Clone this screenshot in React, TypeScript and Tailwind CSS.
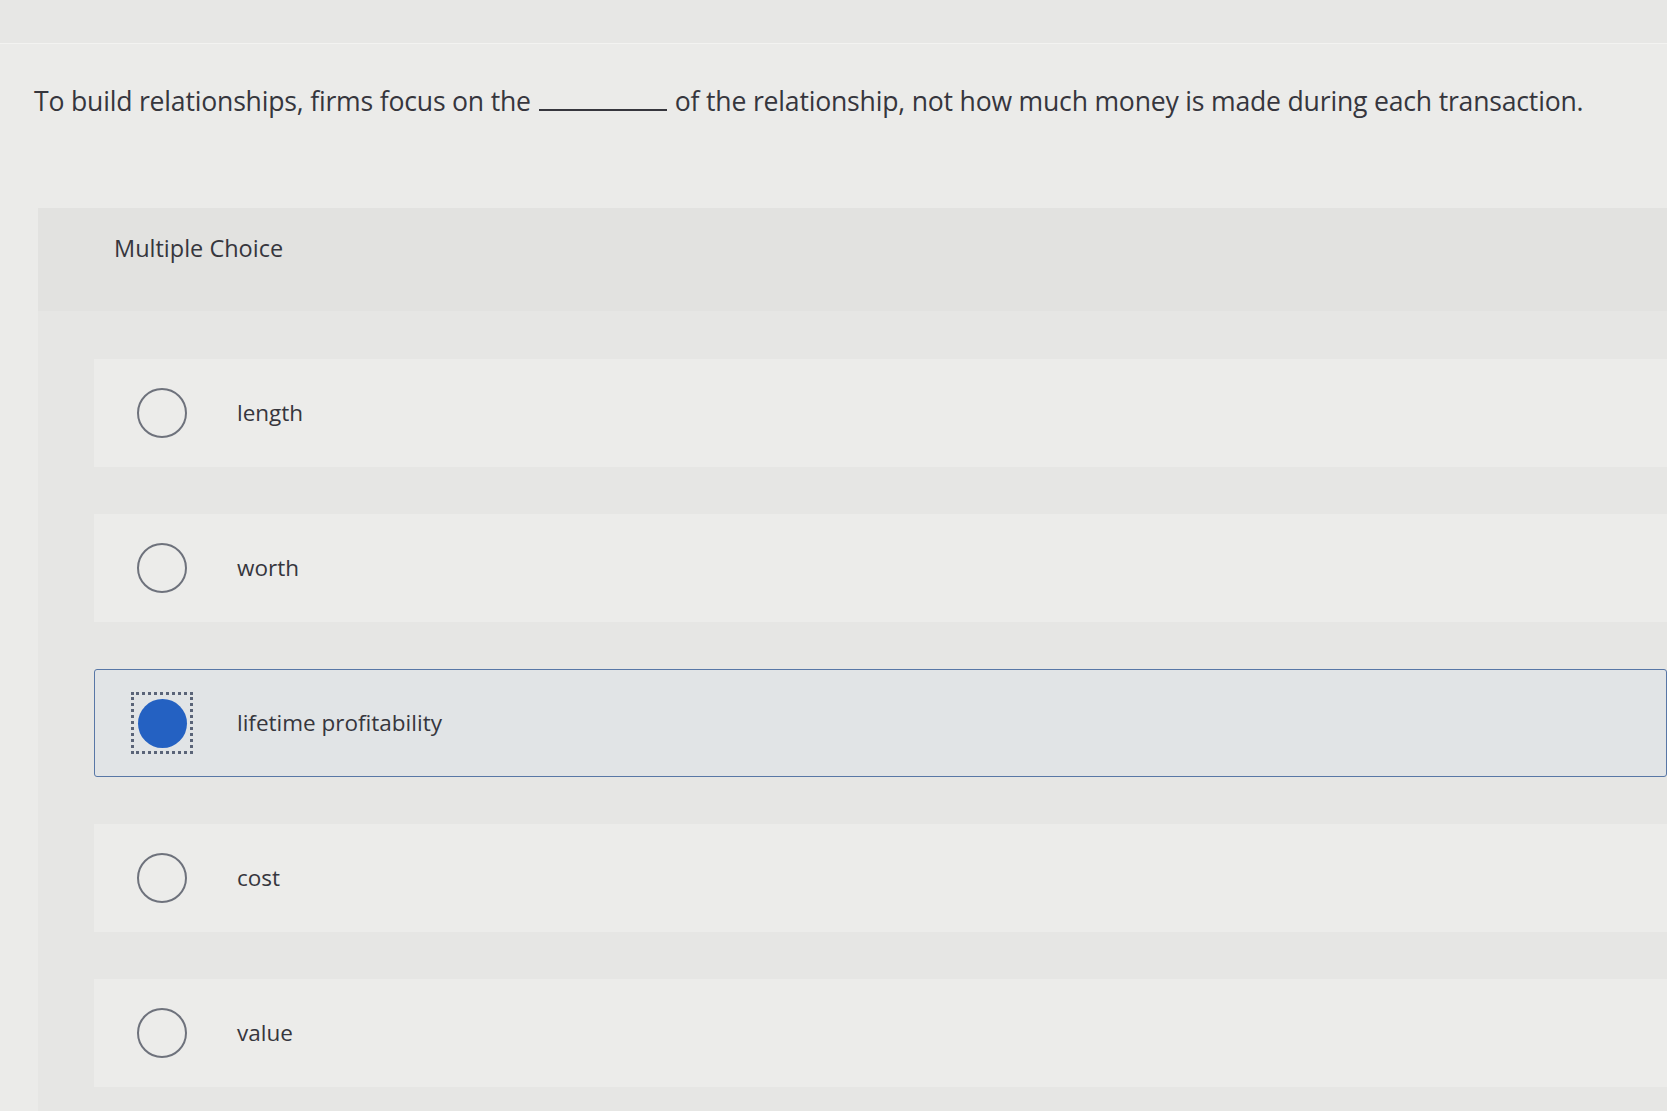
import { useState } from 'react';

const options = ['length', 'worth', 'lifetime profitability', 'cost', 'value'];

export default function App() {
  const [selected, setSelected] = useState(2);

  return (
    <div
      className="h-[1111px] w-full overflow-hidden bg-[#ebebe9] text-[#36363d]"
      style={{ fontFamily: '"Open Sans", "Liberation Sans", sans-serif' }}
    >
      {/* top strip */}
      <div className="h-[44px] border-b border-[#f3f3f1] bg-[#e7e7e5]" />

      {/* question */}
      <div className="pl-[34px] pt-[40px] pr-6">
        <p className="flex items-end whitespace-nowrap text-[26.6px] leading-[34px] tracking-[-0.2px]">
          <span>To build relationships, firms focus on the</span>
          <span className="mx-[8px] mb-[7px] inline-block w-[128px] border-b-2 border-[#36363d]" />
          <span>of the relationship, not how much money is made during each transaction.</span>
        </p>
      </div>

      {/* multiple choice panel */}
      <div className="ml-[38px] mt-[90px] bg-[#e6e6e4] pb-[40px]">
        <div className="h-[103px] bg-[#e2e2e0] pl-[76px] pt-[23px]">
          <span className="text-[23.5px]">Multiple Choice</span>
        </div>

        <div className="flex flex-col gap-[47px] pl-[56px] pt-[48px]">
          {options.map((opt, idx) => {
            const active = selected === idx;
            return (
              <button
                key={opt}
                onClick={() => setSelected(idx)}
                className={
                  active
                    ? 'flex h-[108px] items-center gap-[44px] rounded-[3px] border-[1.5px] border-[#5877a6] bg-[#e1e4e6] pl-[36px] text-left'
                    : 'flex h-[108px] items-center gap-[44px] border-[1.5px] border-transparent bg-[#ececea] pl-[36px] text-left'
                }
              >
                <span className="relative flex h-[62px] w-[62px] shrink-0 items-center justify-center">
                  {active ? (
                    <>
                      <span className="absolute inset-0 border-[3px] border-dotted border-[#5a6478]" />
                      <span className="h-[49px] w-[49px] rounded-full bg-[#2461c2]" />
                    </>
                  ) : (
                    <span className="h-[50px] w-[50px] rounded-full border-2 border-[#6e727c] bg-[#ececea]" />
                  )}
                </span>
                <span className="text-[22.5px]">{opt}</span>
              </button>
            );
          })}
        </div>
      </div>
    </div>
  );
}
